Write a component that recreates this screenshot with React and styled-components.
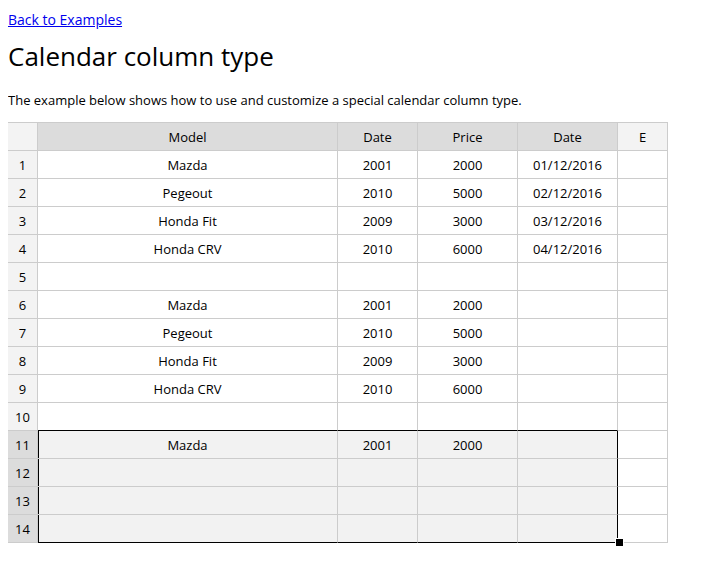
import React from 'react'
import styled, { createGlobalStyle, css } from 'styled-components'

const GlobalStyle = createGlobalStyle`
  body {
    margin: 8px;
    font-family: "Open Sans", "Noto Sans", sans-serif;
    background: #fff;
    color: #000;
  }
`

const BackLink = styled.a`
  display: inline-block;
  margin-top: 2px;
  font-size: 14px;
  color: #0000ee;
  text-decoration: underline;
`

const Title = styled.h1`
  font-size: 26px;
  font-weight: 400;
  margin: 11px 0 19px;
  line-height: 1.2;
`

const Intro = styled.p`
  font-size: 13px;
  margin: 0 0 13px;
`

const Wrap = styled.div`
  position: relative;
  display: inline-block;
  margin-left: -1px;
`

const Sheet = styled.table`
  border-collapse: separate;
  border-spacing: 0;
  table-layout: fixed;
  font-size: 13px;
  border-top: 1px solid #ccc;
  border-left: 1px solid #ccc;
`

const cellBase = css`
  border-right: 1px solid #ccc;
  border-bottom: 1px solid #ccc;
  height: 28px;
  padding: 0 4px;
  text-align: center;
  white-space: nowrap;
  overflow: hidden;
  box-sizing: border-box;
`

const HeadCell = styled.td`
  ${cellBase}
  background: ${p => (p.$active ? '#dcdcdc' : '#f3f3f3')};
`

const IndexCell = styled.td`
  ${cellBase}
  background: ${p => (p.$active ? '#dcdcdc' : '#f3f3f3')};
`

const Cell = styled.td`
  ${cellBase}
  background: ${p => (p.$sel ? '#f2f2f2' : '#fff')};
  ${p => p.$above && 'border-bottom-color: #000;'}
  ${p => p.$bottom && 'border-bottom-color: #000;'}
  ${p => p.$right && 'border-right-color: #000;'}
  ${p => p.$left && 'box-shadow: inset 1px 0 0 #000;'}
`

const Corner = styled.div`
  position: absolute;
  left: 608px;
  top: 416px;
  width: 7px;
  height: 7px;
  background: #000;
  border: 1px solid #fff;
  box-sizing: content-box;
`

const Footer = styled.p`
  font-size: 13px;
  margin: 12px 0 0 34px;
  color: #b9b6d8;
`

const columns = [
  { title: 'Model', width: 300 },
  { title: 'Date', width: 80 },
  { title: 'Price', width: 100 },
  { title: 'Date', width: 100 },
  { title: 'E', width: 50 },
]

const base = [
  ['Mazda', '2001', '2000', '01/12/2016'],
  ['Pegeout', '2010', '5000', '02/12/2016'],
  ['Honda Fit', '2009', '3000', '03/12/2016'],
  ['Honda CRV', '2010', '6000', '04/12/2016'],
  [],
  ['Mazda', '2001', '2000'],
  ['Pegeout', '2010', '5000'],
  ['Honda Fit', '2009', '3000'],
  ['Honda CRV', '2010', '6000'],
  [],
  ['Mazda', '2001', '2000'],
  [],
  [],
  [],
]

// selection: rows 11-14, columns A-D
const selRows = [10, 13]
const selCols = [0, 3]

export default function App() {
  return (
    <>
      <GlobalStyle />
      <BackLink href="#">Back to Examples</BackLink>
      <Title>Calendar column type</Title>
      <Intro>The example below shows how to use and customize a special calendar column type.</Intro>
      <Wrap>
        <Sheet>
          <colgroup>
            <col style={{ width: 30 }} />
            {columns.map((c, i) => (
              <col key={i} style={{ width: c.width }} />
            ))}
          </colgroup>
          <thead>
            <tr>
              <HeadCell />
              {columns.map((c, i) => (
                <HeadCell key={i} $active={i >= selCols[0] && i <= selCols[1]}>
                  {c.title}
                </HeadCell>
              ))}
            </tr>
          </thead>
          <tbody>
            {base.map((row, r) => {
              const rowSel = r >= selRows[0] && r <= selRows[1]
              return (
                <tr key={r}>
                  <IndexCell $active={rowSel}>{r + 1}</IndexCell>
                  {columns.map((c, ci) => {
                    const inCols = ci >= selCols[0] && ci <= selCols[1]
                    const sel = rowSel && inCols
                    return (
                      <Cell
                        key={ci}
                        $sel={sel}
                        $above={inCols && r === selRows[0] - 1}
                        $bottom={sel && r === selRows[1]}
                        $left={sel && ci === selCols[0]}
                        $right={sel && ci === selCols[1]}
                      >
                        {row[ci] || ''}
                      </Cell>
                    )
                  })}
                </tr>
              )
            })}
          </tbody>
        </Sheet>
        <Corner />
      </Wrap>
      <Footer>The calendar column accepts options such as format, readonly and today.</Footer>
    </>
  )
}
